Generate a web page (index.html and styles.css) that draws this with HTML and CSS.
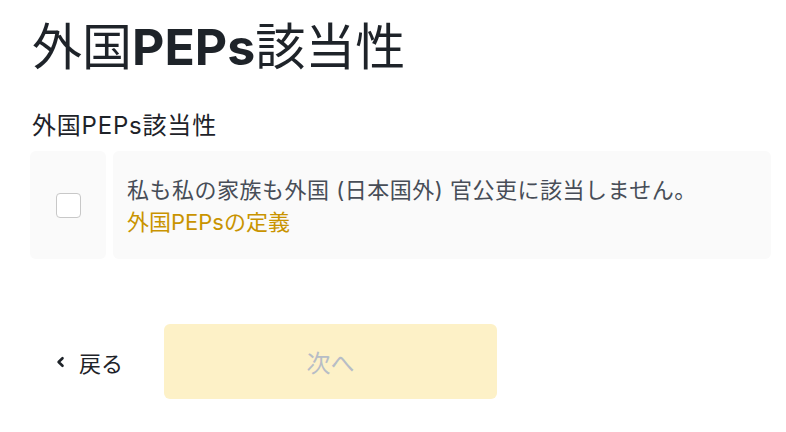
FILE: index.html
```html
<!DOCTYPE html>
<html lang="ja">
<head>
<meta charset="utf-8">
<link rel="stylesheet" href="styles.css">
</head>
<body>
<main class="page">
  <h1 class="title">外国<span class="latin">PEPs</span>該当性</h1>
  <div class="label">外国PEPs該当性</div>
  <div class="option">
    <div class="check-cell"><span class="checkbox"></span></div>
    <div class="text-cell">
      <div class="statement">私も私の家族も外国 (日本国外) 官公吏に該当しません。</div>
      <a class="link">外国PEPsの定義</a>
    </div>
  </div>
  <div class="actions">
    <button class="back"><svg class="chev" width="9" height="12" viewBox="0 0 9 12"><path d="M6.5 2.2 L2.6 6 L6.5 9.8" fill="none" stroke="#1e2329" stroke-width="2.6" stroke-linecap="round" stroke-linejoin="round"/></svg><span>戻る</span></button>
    <button class="next">次へ</button>
  </div>
</main>
</body>
</html>
```

FILE: styles.css
```css
* { box-sizing: border-box; }
html, body { margin: 0; background: #fff; }
body {
  font-family: "Inter", "Noto Sans CJK JP", sans-serif;
  color: #1e2329;
}
.page {
  padding: 12px 15px 0 32px;
}
.title {
  margin: 0;
  font-size: 50px;
  line-height: 70px;
  font-weight: 400;
  color: #1e2329;
}
.title .latin { font-weight: 700; }
.label {
  margin-top: 29px;
  font-size: 24px;
  line-height: 30px;
  letter-spacing: 0.8px;
  color: #1e2329;
}
.option {
  display: flex;
  gap: 7px;
  margin-top: 10px;
  margin-left: -2px;
  height: 108px;
}
.check-cell {
  width: 76px;
  background: #fafafa;
  border-radius: 6px;
  display: flex;
  align-items: center;
  justify-content: center;
}
.checkbox {
  width: 25px;
  height: 25px;
  border: 1.5px solid #c8c8c8;
  border-radius: 4px;
  background: #fff;
}
.text-cell {
  flex: 1;
  background: #fafafa;
  border-radius: 6px;
  padding: 23px 14px;
}
.statement {
  font-size: 22px;
  line-height: 32px;
  letter-spacing: 0.5px;
  color: #474d57;
}
.link {
  display: block;
  font-size: 22px;
  line-height: 32px;
  color: #c99400;
  font-weight: 400;
}
.actions {
  display: flex;
  align-items: center;
  margin-top: 65px;
}
.back {
  display: flex;
  align-items: center;
  gap: 14px;
  background: none;
  border: 0;
  padding: 0 0 0 24px;
  width: 132px;
  font-family: inherit;
  font-size: 22px;
  color: #1e2329;
}
.next {
  width: 333px;
  height: 75px;
  border: 0;
  border-radius: 6px;
  background: #fdf1c7;
  color: #b7bdc6;
  font-family: inherit;
  font-size: 24px;
}
```
